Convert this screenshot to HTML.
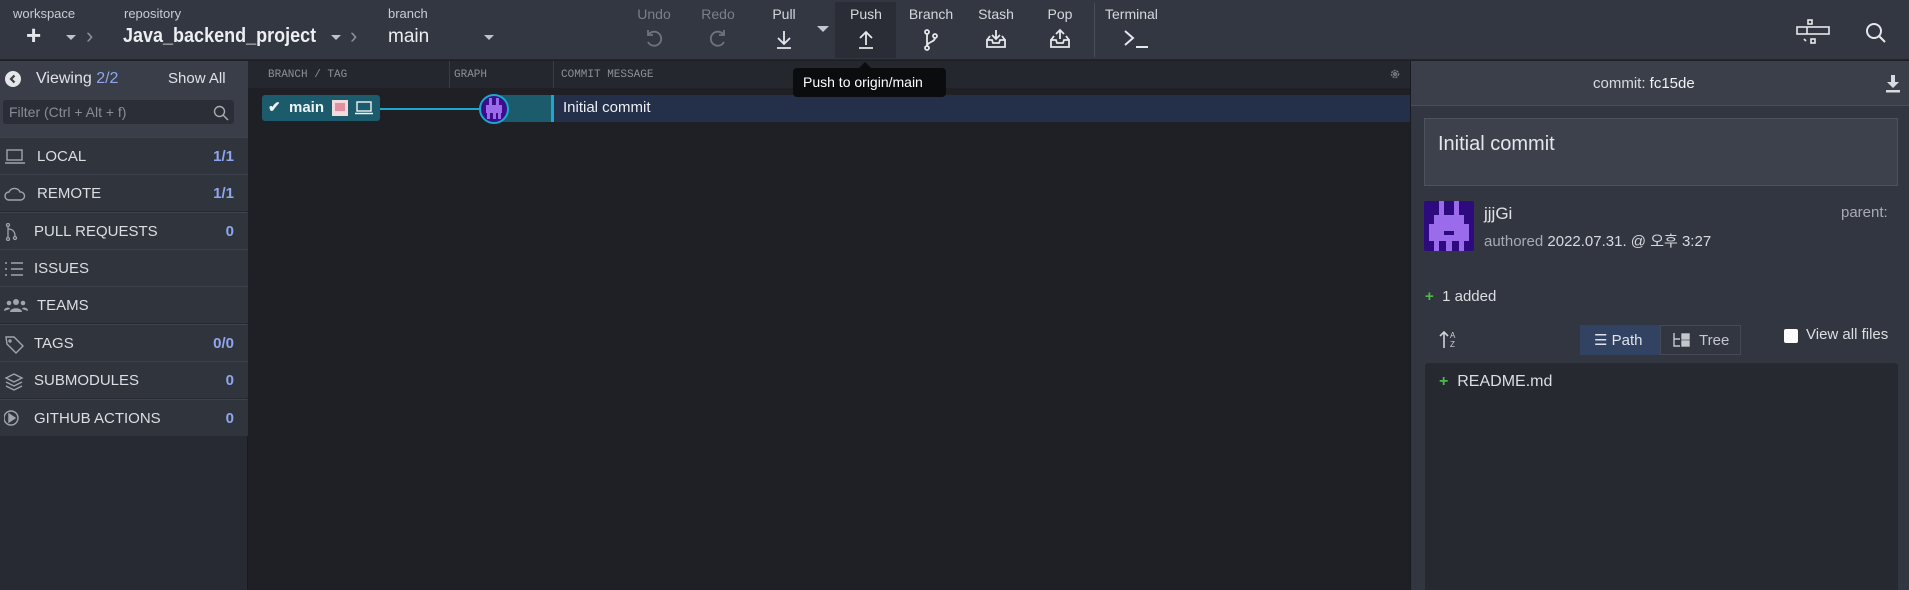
<!DOCTYPE html>
<html><head><meta charset="utf-8"><style>
*{box-sizing:border-box;margin:0;padding:0}
body{width:1909px;height:590px;overflow:hidden;background:#1f2026;font-family:"Liberation Sans","Noto Sans CJK KR",sans-serif;color:#d8dadf;position:relative}
.a{position:absolute}
#tb{left:0;top:0;width:1909px;height:60px;background:#333741;border-bottom:1px solid #23252b}
.lbl{font-size:13px;color:#c9ccd2;top:6px}
.tl{font-size:14px;color:#d6d8dc;top:6px;transform:translateX(-50%);white-space:nowrap}
.tl.dis{color:#7b7f88}
.ic{top:28px;transform:translateX(-50%)}
#sb{left:0;top:61px;width:248px;height:529px;background:#272a32;border-right:1px solid #1a1b20}
.row{position:absolute;left:0;width:248px;height:37px;background:#30343d;border-top:1px solid #3e424c;font-size:15px;color:#dcdee2}
.row .t{position:absolute;left:34px;top:10px}
.row .n{position:absolute;right:14px;top:10px;color:#8ea6ee;font-weight:bold}
.row svg{position:absolute;left:4px;top:10px}
#rp{left:1410px;top:61px;width:499px;height:529px;background:#323640;border-left:1px solid #1a1b20}
</style></head><body>
<div id="tb" class="a">
 <div class="a lbl" style="left:13px">workspace</div>
 <div class="a" style="left:26px;top:20px;font-size:26px;color:#e6e7ea;font-weight:bold">+</div>
 <div class="a" style="left:66px;top:35px;width:0;height:0;border:5px solid transparent;border-top:5px solid #bfc2c8"></div>
 <div class="a" style="left:86px;top:23px;font-size:22px;color:#8c9098">›</div>
 <div class="a lbl" style="left:124px">repository</div>
 <div class="a" style="left:123px;top:25px;font-size:20px;font-weight:bold;color:#eceef1;transform:scaleX(0.9);transform-origin:left top;white-space:nowrap">Java_backend_project</div>
 <div class="a" style="left:331px;top:35px;border:5px solid transparent;border-top:5px solid #bfc2c8"></div>
 <div class="a" style="left:350px;top:23px;font-size:22px;color:#8c9098">›</div>
 <div class="a lbl" style="left:388px">branch</div>
 <div class="a" style="left:388px;top:26px;font-size:19px;color:#eceef1">main</div>
 <div class="a" style="left:484px;top:35px;border:5px solid transparent;border-top:5px solid #bfc2c8"></div>
 <div class="a" style="left:835px;top:2px;width:61px;height:56px;background:#2a2d35"></div>
 <div class="a tl dis" style="left:654px">Undo</div>
 <div class="a tl dis" style="left:718px">Redo</div>
 <div class="a tl" style="left:784px">Pull</div>
 <div class="a tl" style="left:866px">Push</div>
 <div class="a tl" style="left:931px">Branch</div>
 <div class="a tl" style="left:996px">Stash</div>
 <div class="a tl" style="left:1060px">Pop</div>
 <div class="a tl" style="transform:none;left:1105px">Terminal</div>
 <div class="a" style="left:1094px;top:3px;width:1px;height:54px;background:#4a4e58"></div>
 <svg class="a ic" style="left:654px" width="22" height="22" viewBox="0 0 22 22" fill="none" stroke="#6f737c" stroke-width="1.8"><path d="M6 6a7 7 0 1 1-1 8"/><path d="M5 2v5h5"/></svg>
 <svg class="a ic" style="left:718px" width="22" height="22" viewBox="0 0 22 22" fill="none" stroke="#6f737c" stroke-width="1.8"><path d="M16 6a7 7 0 1 0 1 8"/><path d="M17 2v5h-5"/></svg>
 <svg class="a ic" style="left:784px" width="22" height="22" viewBox="0 0 22 22" fill="none" stroke="#e6e7ea" stroke-width="1.8"><path d="M11 3v13M5 10l6 6 6-6M4 20h14"/></svg>
 <div class="a" style="left:817px;top:26px;border:6px solid transparent;border-top:6px solid #c4c7cd"></div>
 <svg class="a ic" style="left:866px" width="22" height="22" viewBox="0 0 22 22" fill="none" stroke="#e6e7ea" stroke-width="1.8"><path d="M11 17V4M5 10l6-6 6 6M4 20h14"/></svg>
 <svg class="a ic" style="left:931px" width="22" height="24" viewBox="0 0 22 24" fill="none" stroke="#e6e7ea" stroke-width="1.8"><circle cx="7" cy="4" r="2"/><circle cx="7" cy="20" r="2"/><circle cx="15" cy="8" r="2"/><path d="M7 6v12M15 10c0 4-8 4-8 8"/></svg>
 <svg class="a ic" style="left:996px" width="24" height="22" viewBox="0 0 24 22" fill="none" stroke="#e6e7ea" stroke-width="1.8"><path d="M12 2v9M8 7l4 4 4-4M3 12l3-4M21 12l-3-4M3 12v7h18v-7h-5l-1 3H9l-1-3z"/></svg>
 <svg class="a ic" style="left:1060px" width="24" height="22" viewBox="0 0 24 22" fill="none" stroke="#e6e7ea" stroke-width="1.8"><path d="M12 11V2M8 6l4-4 4 4M3 12l3-4M21 12l-3-4M3 12v7h18v-7h-5l-1 3H9l-1-3z"/></svg>
 <svg class="a" style="left:1122px;top:28px" width="28" height="22" viewBox="0 0 28 22" fill="none" stroke="#e6e7ea" stroke-width="2"><path d="M3 3l8 7-8 7M14 19h12"/></svg>
 <svg class="a" style="left:1795px;top:17px" width="36" height="32" viewBox="0 0 36 32" fill="none" stroke="#e6e7ea" stroke-width="1.6"><rect x="2" y="10" width="32" height="7"/><path d="M12 10v7"/><rect x="13" y="3" width="4" height="4"/><rect x="16" y="22" width="4" height="4"/><path d="M9 22l2 2"/></svg>
 <svg class="a" style="left:1864px;top:21px" width="24" height="24" viewBox="0 0 24 24" fill="none" stroke="#e6e7ea" stroke-width="2"><circle cx="10" cy="10" r="7"/><path d="M15 15l6 6"/></svg>
</div>

<div id="sb" class="a">
 <div class="a" style="left:0;top:0;width:248px;height:76px;background:#3a3e48"></div>
 <svg class="a" style="left:5px;top:10px" width="16" height="16" viewBox="0 0 16 16"><circle cx="8" cy="8" r="8" fill="#e4e6ea"/><path d="M9.5 4.5L6 8l3.5 3.5" stroke="#3a3e48" stroke-width="2.2" fill="none"/></svg>
 <div class="a" style="left:36px;top:9px;font-size:16px;color:#e0e2e6">Viewing <b style="color:#8ea6ee;font-weight:normal">2/2</b></div>
 <div class="a" style="left:168px;top:9px;font-size:15px;color:#e0e2e6">Show All</div>
 <div class="a" style="left:3px;top:39px;width:231px;height:24px;background:#2b2e36;border-radius:3px;font-size:14px;color:#888c94;padding:4px 6px">Filter (Ctrl + Alt + f)</div>
 <svg class="a" style="left:213px;top:44px" width="16" height="16" viewBox="0 0 16 16" fill="none" stroke="#a8abb2" stroke-width="1.4"><circle cx="6.5" cy="6.5" r="5"/><path d="M10 10l5 5"/></svg>
 <div class="row" style="top:76px"><svg width="22" height="18" viewBox="0 0 22 18" fill="none" stroke="#a0a4ab" stroke-width="1.4"><rect x="3" y="2" width="15" height="10"/><path d="M1 15h20"/></svg><span class="t" style="left:37px">LOCAL</span><span class="n">1/1</span></div>
 <div class="row" style="top:113px"><svg width="22" height="18" viewBox="0 0 22 18" fill="none" stroke="#a0a4ab" stroke-width="1.4"><path d="M5 15a4 4 0 0 1 0-8 6 6 0 0 1 11 0 4 4 0 0 1 1 8z"/></svg><span class="t" style="left:37px">REMOTE</span><span class="n">1/1</span></div>
 <div class="row" style="top:151px"><svg width="22" height="18" viewBox="0 0 22 18" fill="none" stroke="#a0a4ab" stroke-width="1.3"><circle cx="4" cy="2" r="1.5"/><circle cx="4" cy="16" r="1.5"/><circle cx="11" cy="15" r="1.5"/><path d="M4 4v10M4 6c5 0 7 3 7 7"/></svg><span class="t">PULL REQUESTS</span><span class="n">0</span></div>
 <div class="row" style="top:188px"><svg width="22" height="18" viewBox="0 0 22 18" fill="none" stroke="#a0a4ab" stroke-width="1.4"><path d="M1 3h2M7 3h12M1 9h2M7 9h12M1 15h2M7 15h12"/></svg><span class="t">ISSUES</span></div>
 <div class="row" style="top:225px"><svg width="24" height="18" viewBox="0 0 24 18" fill="#a0a4ab"><circle cx="12" cy="5" r="3"/><circle cx="5" cy="6" r="2.3"/><circle cx="19" cy="6" r="2.3"/><path d="M6 15c0-5 12-5 12 0zM0 14c0-4 6-4 6-2zM24 14c0-4-6-4-6-2z"/></svg><span class="t" style="left:37px">TEAMS</span></div>
 <div class="row" style="top:263px"><svg width="22" height="20" viewBox="0 0 22 20" fill="none" stroke="#a0a4ab" stroke-width="1.4"><path d="M2 2h8l9 9-7 7-9-9z"/><circle cx="6" cy="6" r="1"/></svg><span class="t">TAGS</span><span class="n">0/0</span></div>
 <div class="row" style="top:300px"><svg width="22" height="20" viewBox="0 0 22 20" fill="none" stroke="#a0a4ab" stroke-width="1.4"><path d="M10 2l8 4-8 4-8-4zM2 10l8 4 8-4M2 14l8 4 8-4"/></svg><span class="t">SUBMODULES</span><span class="n">0</span></div>
 <div class="row" style="top:338px"><svg width="22" height="20" viewBox="0 0 22 20" fill="none" stroke="#a0a4ab" stroke-width="1.4"><circle cx="7" cy="8" r="7"/><path d="M5 4v8l6-4z" fill="#a0a4ab"/></svg><span class="t">GITHUB ACTIONS</span><span class="n">0</span></div>
</div>

<div class="a" style="left:248px;top:61px;width:1162px;height:27px;background:#25272e;font-family:'Liberation Mono',monospace;font-size:11px;color:#8d9097">
 <span class="a" style="left:20px;top:8px">BRANCH / TAG</span>
 <span class="a" style="left:206px;top:8px">GRAPH</span>
 <span class="a" style="left:313px;top:8px">COMMIT MESSAGE</span>
 <div class="a" style="left:201px;top:0;width:1px;height:27px;background:#3a3d45"></div>
 <div class="a" style="left:305px;top:0;width:1px;height:27px;background:#3a3d45"></div>
 <svg class="a" style="left:1141px;top:7px" width="12" height="12" viewBox="0 0 12 12" fill="none" stroke="#777b83" stroke-width="1.5"><circle cx="6" cy="6" r="3.5" stroke-dasharray="2 1"/><circle cx="6" cy="6" r="1.2"/></svg>
</div>
<div class="a" style="left:554px;top:95px;width:856px;height:27px;background:#243049;font-size:15px;color:#eef0f3;padding:4px 9px">Initial commit</div>
<div class="a" style="left:551px;top:95px;width:3px;height:27px;background:#1aa8cc"></div>
<div class="a" style="left:494px;top:95px;width:57px;height:27px;background:#1c5b6c"></div>
<div class="a" style="left:380px;top:108px;width:100px;height:2px;background:#1aa8cc"></div>
<div class="a" style="left:479px;top:94px;width:30px;height:30px;border-radius:50%;border:2px solid #1aa8cc;background:#3b0e8a;overflow:hidden">
 <div class="a" style="left:5px;top:9px;width:16px;height:8px;background:#9a6cec"></div>
 <div class="a" style="left:8px;top:2px;width:3px;height:7px;background:#9a6cec"></div>
 <div class="a" style="left:15px;top:2px;width:3px;height:7px;background:#9a6cec"></div>
 <div class="a" style="left:6px;top:17px;width:3px;height:6px;background:#9a6cec"></div><div class="a" style="left:12px;top:17px;width:3px;height:6px;background:#9a6cec"></div><div class="a" style="left:17px;top:17px;width:3px;height:6px;background:#9a6cec"></div>
</div>
<div class="a" style="left:262px;top:95px;width:118px;height:26px;background:#1c5b6c;border-radius:3px;font-size:15px;font-weight:bold;color:#f0f2f4">
 <span class="a" style="left:6px;top:3px">✔</span><span class="a" style="left:27px;top:4px">main</span>
 <div class="a" style="left:70px;top:5px;width:16px;height:16px;background:#f2dadd"><div class="a" style="left:3px;top:3px;width:10px;height:8px;background:#e28fa0"></div></div>
 <svg class="a" style="left:93px;top:6px" width="18" height="14" viewBox="0 0 18 14" fill="none" stroke="#f0f2f4" stroke-width="1.4"><rect x="2" y="1" width="14" height="9"/><path d="M0 12.5h18"/></svg>
</div>
<div class="a" style="left:793px;top:68px;width:153px;height:29px;background:#0b0c0e;border-radius:4px;color:#fff;font-size:14px;padding:6px 0 0 10px">Push to origin/main</div>
<div class="a" style="left:859px;top:62px;border:6px solid transparent;border-bottom:6px solid #0b0c0e;border-top:0"></div>

<div id="rp" class="a">
 <div class="a" style="left:0;top:0;width:499px;height:45px;background:#3b3f4a;border-bottom:1px solid #4b4f59"></div>
 <div class="a" style="left:182px;top:14px;font-size:15px;color:#d8dadf">commit: <span style="color:#f0f2f4">fc15de</span></div>
 <svg class="a" style="left:474px;top:14px" width="16" height="18" viewBox="0 0 16 18" fill="#d8dadf"><path d="M6 0h4v7h4l-6 6-6-6h4z"/><rect x="1" y="15" width="14" height="2.5"/></svg>
 <div class="a" style="left:13px;top:57px;width:474px;height:68px;background:#3d414c;border:1px solid #4e525c;font-size:20px;color:#e4e6ea;padding:14px 13px">Initial commit</div>
 <div class="a" style="left:13px;top:140px;width:50px;height:50px;background:#2d0a7d;border-radius:2px;overflow:hidden">
  <div class="a" style="left:5px;top:23px;width:40px;height:17px;background:#9a6cec"></div>
  <div class="a" style="left:15px;top:0;width:5px;height:14px;background:#9a6cec"></div><div class="a" style="left:30px;top:0;width:5px;height:14px;background:#9a6cec"></div>
  <div class="a" style="left:10px;top:14px;width:30px;height:9px;background:#9a6cec"></div>
  <div class="a" style="left:20px;top:30px;width:10px;height:4px;background:#2d0a7d"></div>
  <div class="a" style="left:10px;top:40px;width:5px;height:10px;background:#9a6cec"></div><div class="a" style="left:22px;top:40px;width:6px;height:10px;background:#9a6cec"></div><div class="a" style="left:35px;top:40px;width:5px;height:10px;background:#9a6cec"></div>
 </div>
 <div class="a" style="left:73px;top:143px;font-size:17px;color:#e0e2e6">jjjGi</div>
 <div class="a" style="left:73px;top:169px;font-size:15px;color:#a8abb2">authored <span style="color:#d8dadf">2022.07.31. @ 오후 3:27</span></div>
 <div class="a" style="left:430px;top:143px;font-size:15px;color:#a8abb2">parent:</div>
 <div class="a" style="left:14px;top:227px;font-size:15px;color:#dcdee2"><span style="color:#4cbb4c;font-weight:bold">+</span>&nbsp; 1 added</div>
 <svg class="a" style="left:28px;top:268px" width="20" height="20" viewBox="0 0 20 20" fill="none" stroke="#d0d2d6" stroke-width="1.6"><path d="M5 19V3M1 7l4-4 4 4"/><text x="11" y="9" font-size="8" fill="#d0d2d6" stroke="none" font-family="Liberation Sans">A</text><text x="11" y="18" font-size="8" fill="#d0d2d6" stroke="none" font-family="Liberation Sans">Z</text></svg>
 <div class="a" style="left:169px;top:264px;width:80px;height:30px;background:#324263;font-size:15px;color:#dfe2e8;padding:6px 0 0 14px">☰ Path</div>
 <div class="a" style="left:249px;top:264px;width:81px;height:30px;border:1px solid #454953;font-size:15px;color:#c4c7cd;padding:6px 0 0 38px">Tree</div>
 <svg class="a" style="left:262px;top:272px" width="18" height="14" viewBox="0 0 18 14" fill="none" stroke="#c4c7cd" stroke-width="1.4"><path d="M1 0v13h6M1 6h6"/><rect x="9" y="1" width="7" height="5" fill="#c4c7cd"/><rect x="9" y="8" width="7" height="5" fill="#c4c7cd"/></svg>
 <div class="a" style="left:373px;top:268px;width:14px;height:14px;background:#fff;border-radius:2px"></div>
 <div class="a" style="left:395px;top:265px;font-size:15px;color:#dcdee2">View all files</div>
 <div class="a" style="left:14px;top:302px;width:473px;height:227px;background:#262930;border-radius:3px 3px 0 0"></div>
 <div class="a" style="left:28px;top:312px;font-size:16px;color:#dcdee2"><span style="color:#4cbb4c;font-weight:bold">+</span>&nbsp; README.md</div>
</div>
</body></html>
